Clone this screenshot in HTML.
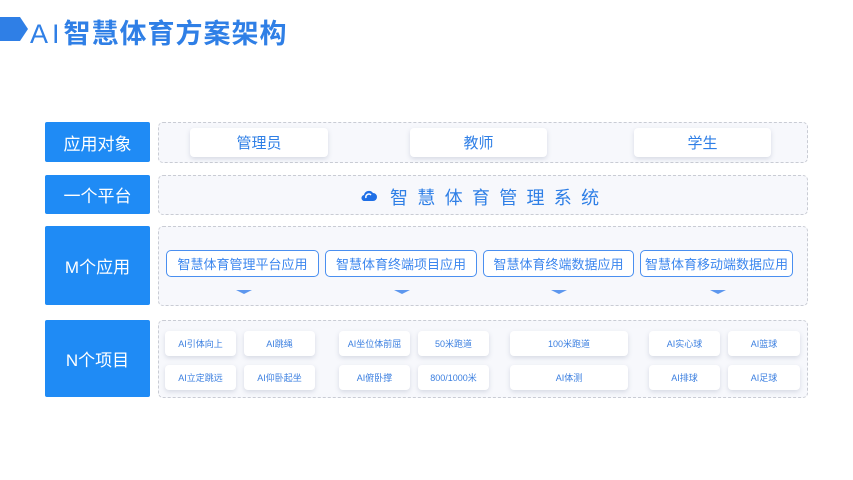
<!DOCTYPE html>
<html><head><meta charset="utf-8"><style>
*{margin:0;padding:0;box-sizing:border-box}
body{width:853px;height:480px;background:#fff;position:relative;overflow:hidden;font-family:"Liberation Sans","Noto Sans CJK SC",sans-serif}
.a{position:absolute}
.lab{position:absolute;left:45px;width:105px;background:#1f8bf5;color:#fff;font-size:17px;display:flex;align-items:center;justify-content:center;border-radius:2px}
.box{position:absolute;left:158px;width:650px;background:#f7f8fc;border:1px dashed #c9ccd4;border-radius:5px}
.card{position:absolute;background:#fff;border-radius:4px;box-shadow:0 2px 5px rgba(120,130,160,.25);color:#2f7fe6;display:flex;align-items:center;justify-content:center}
.btn{position:absolute;top:250px;height:27px;border:1px solid #4a8ff0;border-radius:5px;background:#fff;color:#3b86ee;font-size:13px;display:flex;align-items:center;justify-content:center}
.arr{position:absolute;top:290px;width:0;height:0;border-left:8px solid transparent;border-right:8px solid transparent;border-top:4px solid #5d97ee}
.s{font-size:9px;color:#3b7fe0;height:25px}
</style></head><body>
<svg class="a" style="left:0;top:17px" width="30" height="24"><polygon points="0,0 20,0 28,12 20,24 0,24" fill="#2f7fe6"/></svg>
<div class="a" style="left:30px;top:12px;font-size:27px;font-weight:bold;color:#2f7fe6;letter-spacing:1px"><span style="letter-spacing:4px;font-weight:normal">AI</span>智慧体育方案架构</div>

<div class="lab" style="top:122px;height:40px">应用对象</div>
<div class="lab" style="top:175px;height:39px">一个平台</div>
<div class="lab" style="top:226px;height:79px">M个应用</div>
<div class="lab" style="top:320px;height:77px">N个项目</div>

<div class="box" style="top:122px;height:41px"></div>
<div class="card" style="left:190px;top:128px;width:138px;height:29px;font-size:15px">管理员</div>
<div class="card" style="left:410px;top:128px;width:137px;height:29px;font-size:15px">教师</div>
<div class="card" style="left:634px;top:128px;width:137px;height:29px;font-size:15px">学生</div>

<div class="box" style="top:175px;height:40px"></div>
<svg class="a" style="left:361px;top:188px" width="16" height="13" viewBox="0 0 16 13"><path d="M4 13h8a4 4 0 0 0 0-8 5 5 0 0 0-9 2 3 3 0 0 0 1 6z" fill="#1f6fe6"/><path d="M5 10a3 3 0 0 1 5-3" stroke="#fff" stroke-width="1.5" fill="none"/></svg>
<div class="a" style="left:390px;top:184px;font-size:18px;color:#2f7fe6;letter-spacing:9.3px">智慧体育管理系统</div>

<div class="box" style="top:226px;height:80px"></div>
<div class="btn" style="left:166px;width:153px">智慧体育管理平台应用</div>
<div class="btn" style="left:325px;width:152px">智慧体育终端项目应用</div>
<div class="btn" style="left:483px;width:151px">智慧体育终端数据应用</div>
<div class="btn" style="left:640px;width:153px">智慧体育移动端数据应用</div>
<div class="arr" style="left:236px"></div>
<div class="arr" style="left:394px"></div>
<div class="arr" style="left:551px"></div>
<div class="arr" style="left:710px"></div>

<div class="box" style="top:320px;height:78px"></div>
<div class="card s" style="left:165px;top:331px;width:71px">AI引体向上</div>
<div class="card s" style="left:244px;top:331px;width:71px">AI跳绳</div>
<div class="card s" style="left:339px;top:331px;width:71px">AI坐位体前屈</div>
<div class="card s" style="left:418px;top:331px;width:71px">50米跑道</div>
<div class="card s" style="left:510px;top:331px;width:118px">100米跑道</div>
<div class="card s" style="left:649px;top:331px;width:71px">AI实心球</div>
<div class="card s" style="left:728px;top:331px;width:72px">AI篮球</div>
<div class="card s" style="left:165px;top:365px;width:71px">AI立定跳远</div>
<div class="card s" style="left:244px;top:365px;width:71px">AI仰卧起坐</div>
<div class="card s" style="left:339px;top:365px;width:71px">AI俯卧撑</div>
<div class="card s" style="left:418px;top:365px;width:71px">800/1000米</div>
<div class="card s" style="left:510px;top:365px;width:118px">AI体测</div>
<div class="card s" style="left:649px;top:365px;width:71px">AI排球</div>
<div class="card s" style="left:728px;top:365px;width:72px">AI足球</div>
</body></html>
